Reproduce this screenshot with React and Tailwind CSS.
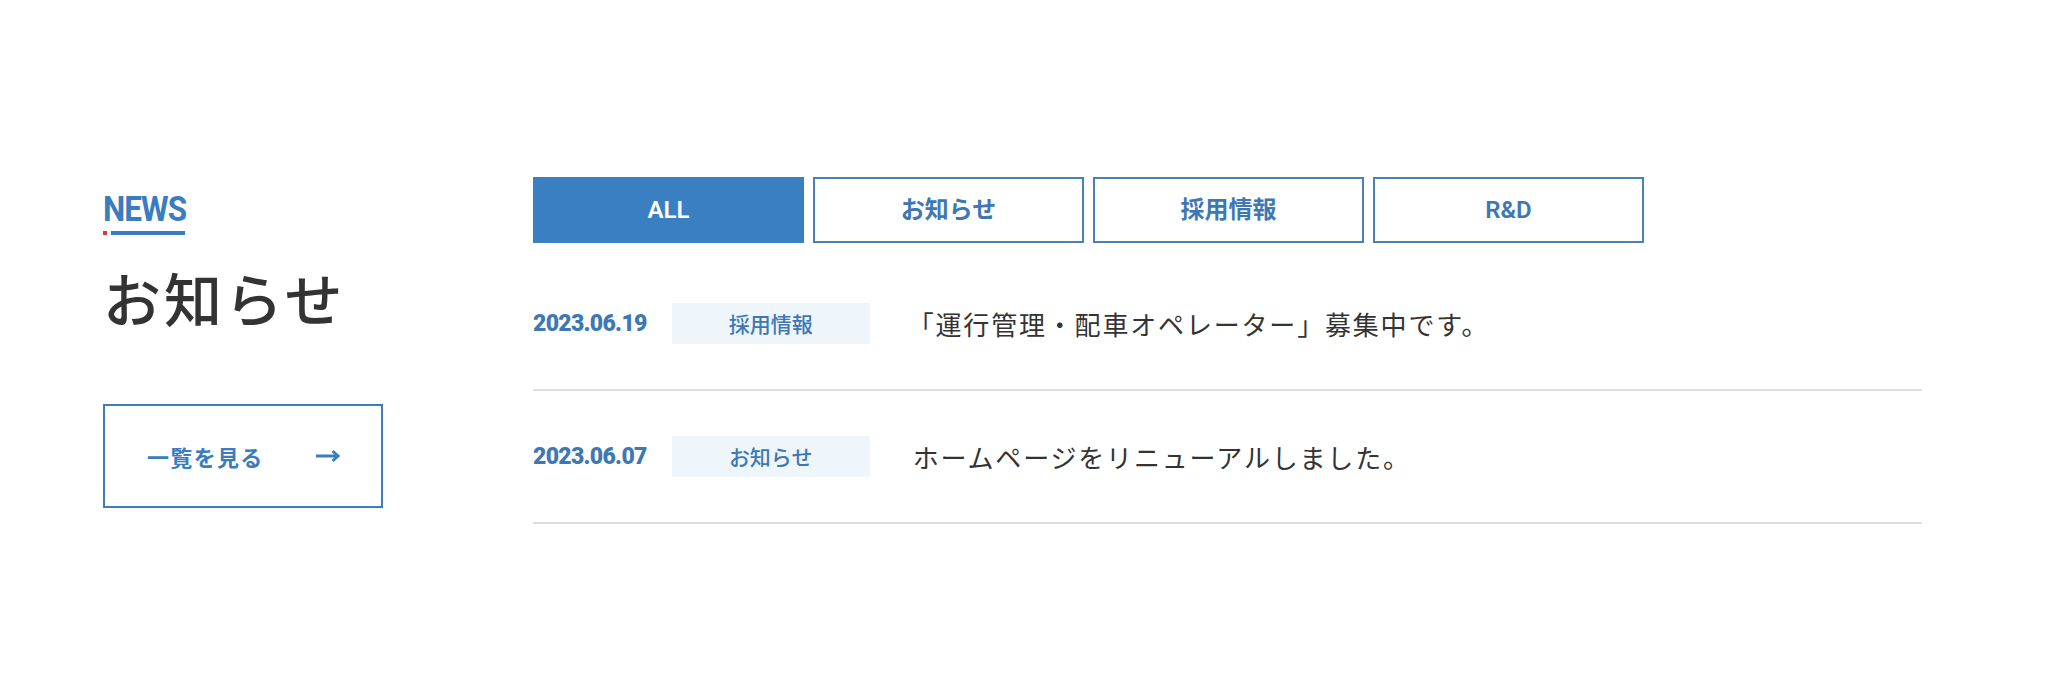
import { useState } from 'react'

const TABS = ['ALL', 'お知らせ', '採用情報', 'R&D']

const NEWS = [
  { date: '2023.06.19', cat: '採用情報', title: '「運行管理・配車オペレーター」募集中です。' },
  { date: '2023.06.07', cat: 'お知らせ', title: 'ホームページをリニューアルしました。' },
]

const latin = { fontFamily: 'Roboto, "Noto Sans CJK JP", sans-serif' }

export default function App() {
  const [tab, setTab] = useState('ALL')

  return (
    <div
      className="w-full h-[693px] bg-white flex pl-[103px] pr-[126px] pt-[177px] text-[#333]"
      style={{ fontFamily: '"Noto Sans CJK JP", "Noto Sans", sans-serif' }}
    >
      {/* left: heading + link */}
      <div className="w-[430px] shrink-0">
        <p
          className="mt-[15px] inline-block origin-left scale-x-90 text-[35px] leading-none font-bold tracking-[-0.03em] text-[#3a7cc0]"
          style={latin}
        >
          NEWS
        </p>
        <div className="mt-[4px] flex items-center gap-[4px]">
          <span className="w-[4px] h-[4px] bg-[#d8383a]" />
          <span className="w-[74px] h-[4px] bg-[#3a7cc0]" />
        </div>
        <h2 className="mt-[33px] text-[58px] leading-none font-medium tracking-[0.05em] text-[#333]">お知らせ</h2>
        <a
          href="#"
          className="mt-[78px] w-[280px] h-[104px] border-2 border-[#3d7dbd] flex items-center justify-between pl-[42px] pr-[40px] text-[#3a7cc0]"
        >
          <span className="text-[22px] font-bold tracking-[0.06em]">一覧を見る</span>
          <svg width="26" height="14" viewBox="0 0 26 14" fill="none">
            <path d="M1 7h21" stroke="currentColor" strokeWidth="3" />
            <path d="M17.5 2 23 7 17.5 12" stroke="currentColor" strokeWidth="3" />
          </svg>
        </a>
      </div>

      {/* right: tabs + list */}
      <div className="flex-1">
        <div className="flex gap-[9px]">
          {TABS.map(t => (
            <button
              key={t}
              onClick={() => setTab(t)}
              className={`w-[271px] h-[66px] border-2 flex items-center justify-center text-[24px] font-semibold ${
                tab === t ? 'bg-[#3a7fc2] border-[#3a7fc2] text-white' : 'bg-white border-[#4a80b8] text-[#3d78b4]'
              }`}
              style={latin}
            >
              {t}
            </button>
          ))}
        </div>

        <ul className="mt-[15px]">
          {NEWS.map(n => (
            <li key={n.date} className="flex items-center py-[45px] border-b-2 border-[#dedede]">
              <span className="text-[23px] font-black leading-none tracking-[-0.03em] text-[#3d78b4]" style={latin}>
                {n.date}
              </span>
              <span className="ml-[25px] w-[198px] h-[41px] bg-[#eef6fc] flex items-center justify-center text-[21px] font-medium text-[#3d78b4]">
                {n.cat}
              </span>
              <span className="ml-[43px] text-[26px] tracking-[0.07em] text-[#333]">
                {n.title.startsWith('「') ? (
                  <>
                    <span className="-ml-[5px]">「</span>
                    {n.title.slice(1)}
                  </>
                ) : (
                  n.title
                )}
              </span>
            </li>
          ))}
        </ul>
      </div>
    </div>
  )
}
